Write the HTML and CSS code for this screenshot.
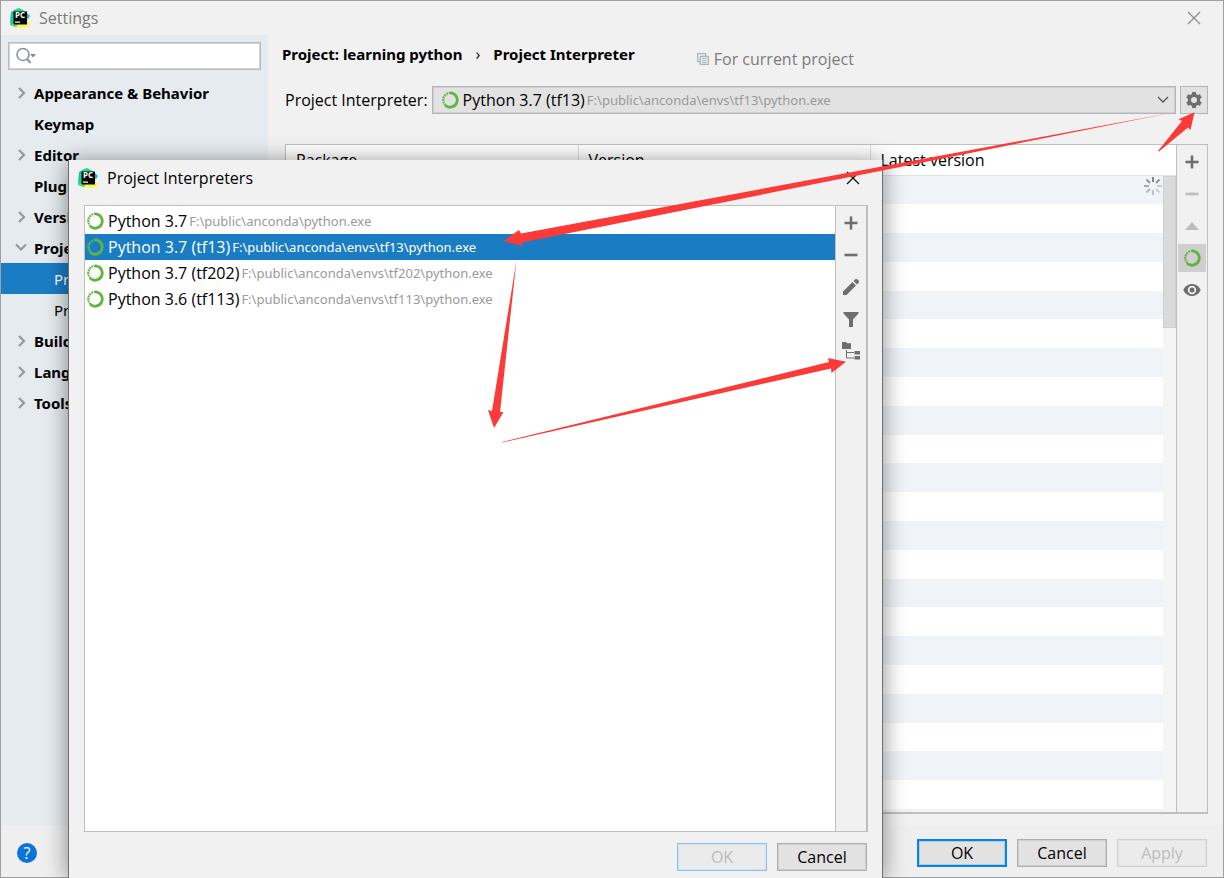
FILE: index.html
```html
<!DOCTYPE html>
<html lang="en">
<head>
<meta charset="utf-8">
<title>Settings</title>
<link rel="stylesheet" href="styles.css">
</head>
<body>
<svg class="defs" aria-hidden="true">
  <symbol id="logo" viewBox="0 0 20 20">
    <path fill="#21d789" d="M1 4 6 1 9 0l4 2 4 3-1 11-11 3-5-2z"/>
    <path fill="#14c8a0" d="M1 5 5 2v12l-4.500 1z"/>
    <path fill="#0fb6e8" d="M14 3 17 5l3 3-2 3-3-1z"/>
    <path fill="#fcf84a" d="M16 8 20 18.500 10 20 3 17z"/>
    <path fill="#6fe05a" d="M0 16h8l-2 3.500z"/>
    <rect x="3.500" y="3.500" width="13.500" height="13" fill="#060606"/>
    <path fill="#fff" d="M5 13.500h5v1.200H5z"/>
  </symbol>
  <symbol id="ring" viewBox="0 0 18 18">
    <path fill="none" stroke="#5fb53f" stroke-width="2.800" d="M9 1.800a7.200 7.200 0 1 1-4.600 12.700"/>
    <path fill="none" stroke="#5fb53f" stroke-width="2" stroke-dasharray="1.800 .8" d="M4.600 14.400A7.200 7.200 0 0 1 9 1.800"/>
    <path fill="none" stroke="#8fce78" stroke-width=".9" stroke-dasharray="1 1.300" d="M4.500 12.500A5.700 5.700 0 0 1 8 3.500"/>
  </symbol>
  <symbol id="plus" viewBox="0 0 18 18"><path fill="#6e6e6e" d="M7.700 2.500h2.600v5.200h5.200v2.600h-5.200v5.200H7.700v-5.200H2.500V7.700h5.200z"/></symbol>
  <symbol id="minus" viewBox="0 0 18 18"><path fill="currentColor" d="M2.500 7.700h13v2.600h-13z"/></symbol>
  <symbol id="right" viewBox="0 0 12 12"><path fill="none" stroke="#969a9c" stroke-width="2.200" d="m4 1 5 5-5 5"/></symbol>
  <symbol id="down" viewBox="0 0 12 12"><path fill="none" stroke="#969a9c" stroke-width="2.200" d="m1 2.500 5 5 5-5"/></symbol>
</svg>

<main class="window">
  <header class="titlebar">
    <svg class="logo"><use href="#logo"/><text x="5" y="10">PC</text></svg>
    <h1 class="title muted">Settings</h1>
    <button class="close" aria-label="Close settings"><svg viewBox="0 0 14 14"><path fill="none" stroke="#8c8c8c" stroke-width="1.200" d="m1 1 12 12M13 1 1 13"/></svg></button>
  </header>

  <div class="body">
    <nav class="sidebar">
      <label class="search">
        <svg viewBox="0 0 22 18"><circle cx="7" cy="7.500" r="6" fill="none" stroke="#8b969b" stroke-width="1.600"/><path stroke="#8b969b" stroke-width="2" d="m11 12 3.500 4"/><path fill="#7f8b91" d="M14 7h6l-3 3.500z"/></svg>
        <input type="text" aria-label="Search settings">
      </label>
      <ul class="tree">
        <li><svg><use href="#right"/></svg>Appearance &amp; Behavior</li>
        <li class="leaf">Keymap</li>
        <li><svg><use href="#right"/></svg>Editor</li>
        <li class="leaf">Plugins</li>
        <li><svg><use href="#right"/></svg>Version Control</li>
        <li><svg><use href="#down"/></svg>Project: learning python</li>
        <li class="child selected">Project Interpreter</li>
        <li class="child">Project Structure</li>
        <li><svg><use href="#right"/></svg>Build, Execution</li>
        <li><svg><use href="#right"/></svg>Languages</li>
        <li><svg><use href="#right"/></svg>Tools</li>
      </ul>
    </nav>

    <section class="content">
      <div class="crumbs">
        <b>Project: learning python</b><span class="sep">›</span><b>Project Interpreter</b>
        <span class="scope"><svg viewBox="0 0 12 12"><path fill="none" stroke="#a9b4ba" stroke-width="1.300" d="M3 8.500H.7V.7h8V3"/><path fill="#eef1f2" stroke="#a9b4ba" stroke-width="1.300" d="M3.300 3.300h8v8h-8z"/><path stroke="#a9b4ba" d="M5 5.500h4.500M5 7.500h4.500M5 9.500h4.500"/></svg>For current project</span>
      </div>
      <div class="picker">
        <span id="picker-label">Project Interpreter:</span>
        <button class="combo" aria-labelledby="picker-label" aria-haspopup="listbox">
          <svg class="ring"><use href="#ring"/></svg><span>Python 3.7 (tf13)</span><span class="path">F:\public\anconda\envs\tf13\python.exe</span>
          <svg class="chevron" viewBox="0 0 12 8"><path fill="none" stroke="#555" stroke-width="1.300" d="m1 1 5 5 5-5"/></svg>
        </button>
        <button class="gear" aria-label="Interpreter options"><svg viewBox="0 0 18 18"><path fill="#6e6e6e" fill-rule="evenodd" d="M7.200 1h3.600l.5 2.300 1.400.8 2.200-.8 1.800 3.100L15 8v2l1.700 1.600-1.800 3.100-2.200-.8-1.400.8-.5 2.300H7.200l-.5-2.300-1.400-.8-2.200.8-1.800-3.100L3 10V8L1.300 6.400l1.800-3.100 2.200.8 1.400-.8zM9 6a3 3 0 1 0 0 6 3 3 0 0 0 0-6z"/></svg></button>
      </div>

      <div class="packages">
        <div class="grid">
          <table>
            <thead><tr><th>Package</th><th>Version</th><th>Latest version</th></tr></thead>
          </table>
          <div class="scroller">
            <div class="stripes">
              <i></i><i></i><i></i><i></i><i></i><i></i><i></i><i></i><i></i><i></i><i></i>
              <i></i><i></i><i></i><i></i><i></i><i></i><i></i><i></i><i></i><i></i><i></i>
              <svg class="spinner" viewBox="0 0 18 18" fill="none" stroke-width="2"><path stroke="#7d868b" d="M9 0v5"/><path stroke="#8b9499" d="m15.500 2.500-3.500 3.500"/><path stroke="#c7cdd1" d="M13 9h5M12 12l3.500 3.500"/><path stroke="#bcc2c6" d="M9 13v5"/><path stroke="#b0b7bb" d="M6 12l-3.500 3.500"/><path stroke="#a3abb0" d="M0 9h5"/><path stroke="#8f989d" d="M2.500 2.500 6 6"/></svg>
            </div>
            <div class="track"><div class="thumb"></div></div>
          </div>
        </div>
        <div class="tools">
          <button aria-label="Install"><svg><use href="#plus"/></svg></button>
          <button class="off" aria-label="Uninstall"><svg><use href="#minus"/></svg></button>
          <button aria-label="Upgrade"><svg viewBox="0 0 18 18"><path fill="#bdbdbd" d="m9 5 7 8H2z"/></svg></button>
          <button class="on" aria-label="Use Conda"><svg><use href="#ring"/></svg></button>
          <button aria-label="Show early releases"><svg viewBox="0 0 18 18"><path fill="#6e6e6e" fill-rule="evenodd" d="M9 3C5 3 1.800 5.500.3 9 1.800 12.500 5 15 9 15s7.200-2.500 8.700-6C16.200 5.500 13 3 9 3zm0 1.800a4.200 4.200 0 1 1 0 8.400 4.200 4.200 0 0 1 0-8.400z"/><circle cx="9" cy="9" r="2.500" fill="#6e6e6e"/></svg></button>
        </div>
      </div>
    </section>
  </div>

  <footer class="footer">
    <button class="help" aria-label="Help">?</button>
    <button class="btn primary">OK</button>
    <button class="btn">Cancel</button>
    <button class="btn" disabled>Apply</button>
  </footer>
</main>

<section class="dialog" role="dialog" aria-labelledby="dialog-title">
  <header class="titlebar">
    <svg class="logo"><use href="#logo"/><text x="5" y="10">PC</text></svg>
    <h2 class="title" id="dialog-title">Project Interpreters</h2>
    <button class="close" aria-label="Close dialog"><svg viewBox="0 0 14 14"><path fill="none" stroke="#111" stroke-width="1.300" d="m1 1 12 12M13 1 1 13"/></svg></button>
  </header>
  <div class="chooser">
    <ul class="list">
      <li><svg class="ring"><use href="#ring"/></svg><span>Python 3.7</span><span class="path">F:\public\anconda\python.exe</span></li>
      <li class="selected"><svg class="ring"><use href="#ring"/></svg><span>Python 3.7 (tf13)</span><span class="path">F:\public\anconda\envs\tf13\python.exe</span></li>
      <li><svg class="ring"><use href="#ring"/></svg><span>Python 3.7 (tf202)</span><span class="path">F:\public\anconda\envs\tf202\python.exe</span></li>
      <li><svg class="ring"><use href="#ring"/></svg><span>Python 3.6 (tf113)</span><span class="path">F:\public\anconda\envs\tf113\python.exe</span></li>
    </ul>
    <div class="tools">
      <button aria-label="Add"><svg><use href="#plus"/></svg></button>
      <button aria-label="Remove"><svg><use href="#minus"/></svg></button>
      <button aria-label="Edit"><svg viewBox="0 0 18 18"><path fill="#6e6e6e" d="m1 13.500 9.500-9.500 3.500 3.500L4.500 17H1zM11.500 3l1.700-1.700q1-.8 2 0l1.500 1.500q.8 1 0 2L15 6.500z"/></svg></button>
      <button aria-label="Filter"><svg viewBox="0 0 18 18"><path fill="#6e6e6e" d="M1.500 2h15v1.500L11 9.500V17H7V9.500L1.500 3.500z"/></svg></button>
      <button aria-label="Show paths"><svg viewBox="0 0 18 18"><path fill="#6e6e6e" d="M0 0h4l1 1.200h4V7H0zM12.500 9H18v3.500h-5.500zM12.500 14H18v3.500h-5.500z"/><path fill="none" stroke="#6e6e6e" d="M4.500 8v8H12M4.500 10.500H12"/></svg></button>
    </div>
  </div>
  <footer class="actions">
    <button class="btn primary" disabled>OK</button>
    <button class="btn">Cancel</button>
  </footer>
</section>

<svg class="arrows" width="1224" height="878" viewBox="0 0 1224 878" fill="#fc3a38" aria-hidden="true">
  <path d="M1173 112.500 521 233.500l-2-3.500-15.500 11 18.500 5v-3.500z"/>
  <path d="m516.500 260-24.500 151-4-1 6 18 9.500-16h-3.500z"/>
  <path d="m502 442 327-80-1-4 18 3.700-14.500 11.300-.5-4.500-329 74z"/>
  <path d="m1158 151 24-30-3.500-1.700 16-7-4 17.700-2.500-2.500-29 24z"/>
</svg>
</body>
</html>
```

FILE: styles.css
```css
* { box-sizing: border-box; }

body {
  margin: 0;
  min-height: 100vh;
  font: 16px/20px "Open Sans", "Noto Sans", sans-serif;
  color: #000;
  background: #f1f1f1;
}

button, input { font: inherit; color: inherit; margin: 0; padding: 0; border: 0; background: none; }
ul { list-style: none; margin: 0; padding: 0; }
svg { display: block; flex: none; }
.defs { position: absolute; width: 0; height: 0; }

.window {
  display: flex;
  flex-direction: column;
  height: 100vh;
  border: 1px solid #a0a0a0;
}

.titlebar { display: flex; align-items: center; height: 34px; padding: 0 22px 0 9px; }
.logo { width: 20px; height: 20px; }
.logo text { font-size: 8px; font-weight: 700; fill: #fff; }
.title { flex: 1; margin: 0 0 0 9px; font-size: 16px; font-weight: 400; }
.muted { color: #7b7b7b; }
.close svg { width: 14px; height: 14px; }

.body { flex: 1; display: flex; min-height: 0; }

.sidebar { width: 267px; flex: none; background: #e5ebef; }
.search {
  display: flex;
  align-items: center;
  height: 28px;
  margin: 7px;
  padding-left: 7px;
  border: 1px solid #bababa;
  outline: 1px solid #d3d6d8;
  outline-offset: -2px;
  background: #fff;
}
.search svg { width: 22px; height: 18px; }
.search input { flex: 1; min-width: 0; outline: 0; }

.tree li {
  display: flex;
  align-items: center;
  height: 31px;
  padding-left: 14px;
  font: 700 15px/18px "Noto Sans", sans-serif;
  white-space: nowrap;
}
.tree svg { width: 12px; height: 12px; margin-right: 7px; }
.tree .leaf { padding-left: 33px; }
.tree .child { padding-left: 53px; font-weight: 400; }
.selected { background: #1a7dc4; color: #fff; }

.content { flex: 1; min-width: 0; display: flex; flex-direction: column; padding: 6px 15px 12px 17px; }
.crumbs { display: flex; align-items: center; height: 26px; margin-left: -3px; }
.crumbs b { font: 700 15px/20px "Noto Sans", sans-serif; }
.sep { margin: 0 13px; }
.scope { display: flex; align-items: center; gap: 5px; margin: 10px 0 0 62px; color: #7b7b7b; }
.scope svg { width: 12px; height: 12px; }

.picker { display: flex; align-items: center; gap: 4px; margin-top: 19px; }
.combo {
  flex: 1;
  display: flex;
  align-items: center;
  height: 28px;
  padding: 0 6px 0 8px;
  border: 1px solid #b4b4b4;
  outline: 1px solid #cfcfcf;
  outline-offset: -2px;
  background: #e2e2e2;
}
.combo .chevron { width: 12px; height: 8px; margin-left: auto; }
.ring { width: 18px; height: 18px; margin-right: 4px; }
.path { margin-left: 2px; font: 13px/20px "Noto Sans", sans-serif; color: #999; }
.gear {
  display: grid;
  place-items: center;
  width: 28px;
  height: 28px;
  border: 1px solid #b4b4b4;
  background: #e2e2e2;
}
.gear svg { width: 18px; height: 18px; }

.packages { flex: 1; min-height: 0; display: flex; margin-top: 30px; border: 1px solid #bfbfbf; border-bottom-width: 2px; }
.grid { flex: 1; display: flex; flex-direction: column; background: #fff; }
.grid table { width: 100%; table-layout: fixed; border-collapse: collapse; }
.grid th { width: 292px; height: 30px; padding: 0 10px; border-right: 1px solid #dcdcdc; border-bottom: 1px solid #e2e2e2; font-weight: 400; text-align: left; }
.grid th:last-child { width: auto; border-right: 0; }
.scroller { flex: 1; display: flex; }
.stripes { flex: 1; display: flex; flex-direction: column; position: relative; border-bottom: 3px solid #f0f4f9; }
.stripes i { flex: 1; }
.stripes i:nth-child(odd) { background: #f0f4f9; }
.spinner { position: absolute; top: 1px; right: 1px; width: 18px; height: 18px; }
.track { width: 13px; background: #f5f5f5; }
.thumb { height: 152px; border: 1px solid #cfcfcf; background: #dadada; }

.tools { display: flex; flex-direction: column; align-items: center; gap: 4px; width: 31px; padding-top: 3px; border-left: 1px solid #bfbfbf; background: #f1f1f1; color: #6e6e6e; }
.tools button { display: grid; place-items: center; width: 28px; height: 28px; }
.tools svg { width: 18px; height: 18px; }
.tools .off { color: #bdbdbd; }
.tools .on { background: #cfcfcf; }

.footer { display: flex; align-items: center; gap: 10px; height: 51px; padding: 2px 16px 0; background: #efefef; }
.help { width: 20px; height: 20px; margin-right: auto; border-radius: 50%; background: #0a74da; color: #fff; }
.btn { width: 90px; height: 28px; border: 1px solid #adadad; outline: 1px solid #cfcfcf; outline-offset: -2px; background: #e2e2e2; }
.btn:disabled { border-color: #d0d0d0; outline-color: #e2e2e2; background: #ebebeb; color: #bcbcbc; }
.primary { border: 2px solid #0a84e0; outline-color: #a8cdee; outline-offset: -3px; }
.primary:disabled { border: 1px solid #86c1ee; outline-color: #d4e4f0; outline-offset: -2px; }

.dialog {
  position: absolute;
  top: 160px;
  left: 68px;
  bottom: 0;
  width: 815px;
  display: flex;
  flex-direction: column;
  padding: 0 14px 7px 15px;
  border: solid #6f6f6f;
  border-width: 0 1px;
  background: #f1f1f1;
  box-shadow: 0 2px 22px rgba(0, 0, 0, .45);
}
.dialog .titlebar { height: 36px; padding: 0 8px 0 0; margin: 0 0 9px -6px; }
.chooser { flex: 1; display: flex; border: 1px solid #bfbfbf; border-right-width: 2px; }
.list { flex: 1; padding-top: 2px; background: #fff; }
.list li { display: flex; align-items: center; height: 26px; padding-left: 1px; }
.list .selected .path { color: #fff; }
.actions { display: flex; justify-content: flex-end; gap: 10px; margin-top: 11px; padding-right: 1px; }

.arrows { position: absolute; top: 0; left: 0; pointer-events: none; }
```
